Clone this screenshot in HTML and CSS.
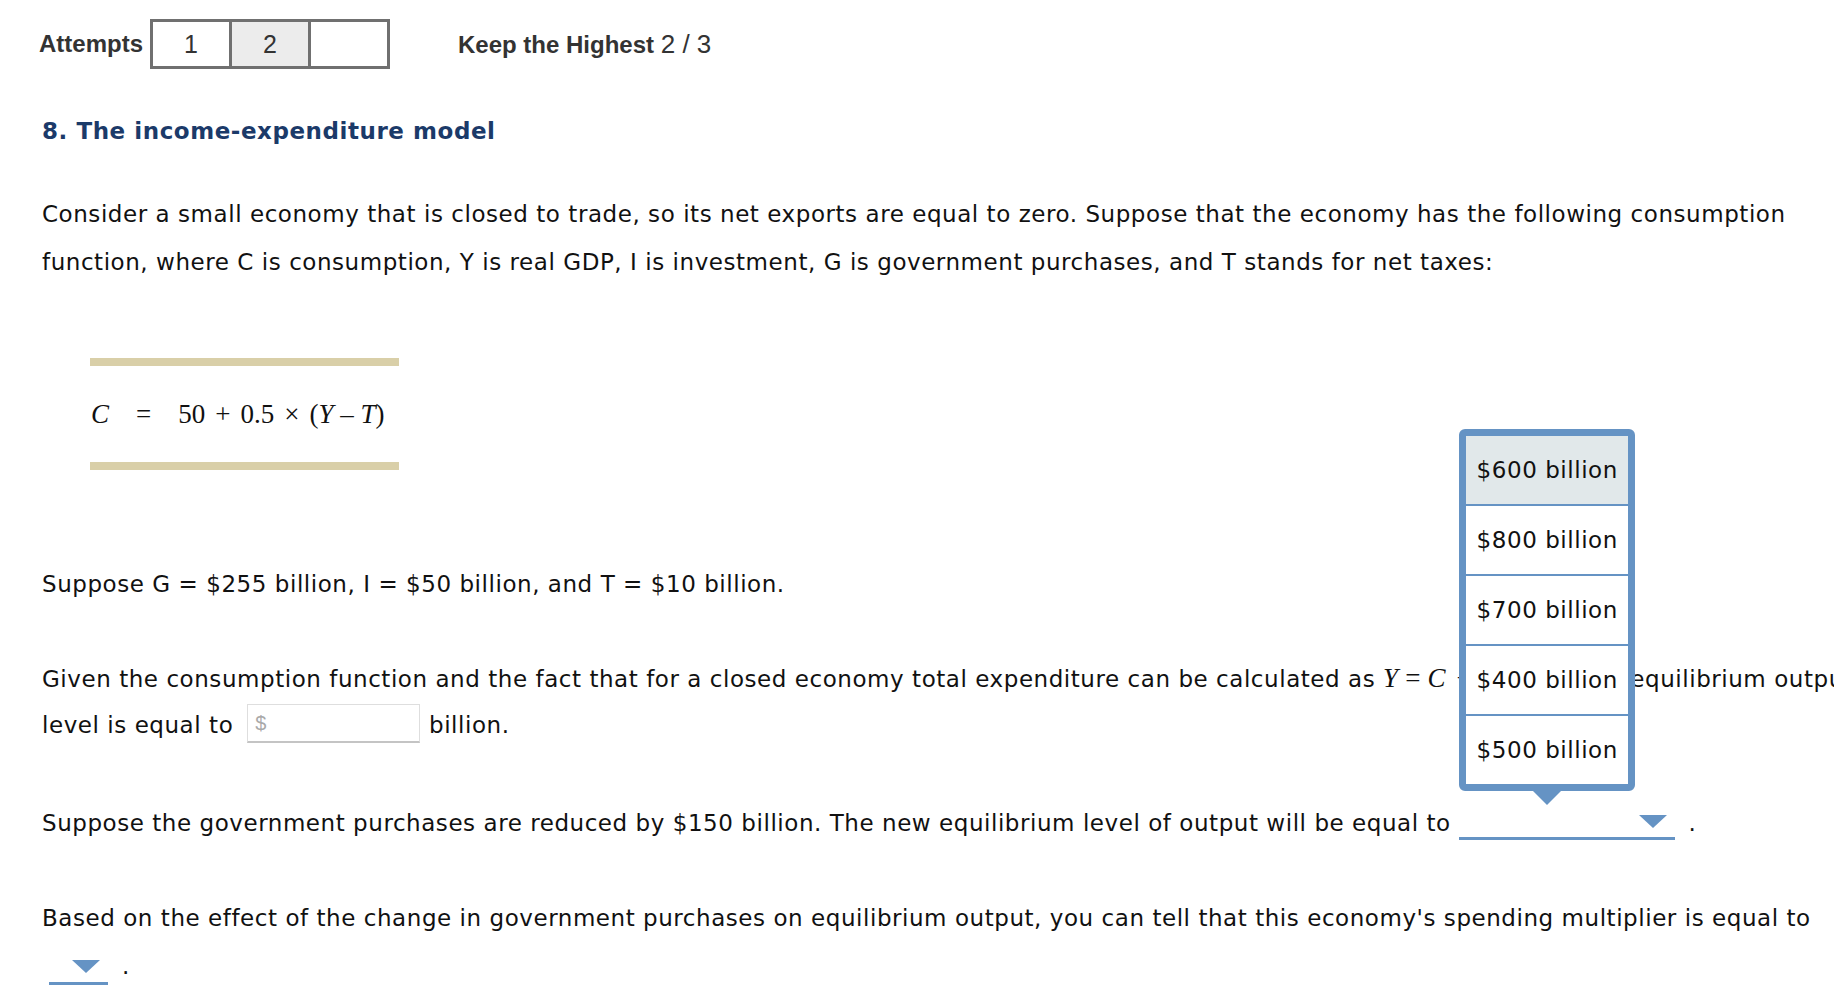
FILE: index.html
```html
<!DOCTYPE html>
<html>
<head>
<meta charset="utf-8">
<link rel="stylesheet" href="styles.css">
</head>
<body>
<div class="page">
  <div class="attempts-row">
    <span class="label">Attempts</span>
    <div class="attempt-boxes">
      <div class="attempt">1</div>
      <div class="attempt current">2</div>
      <div class="attempt"></div>
    </div>
    <span class="label keep">Keep the Highest <span class="score">2 / 3</span></span>
  </div>

  <h2 class="title">8. The income-expenditure model</h2>

  <p class="para p1">Consider a small economy that is closed to trade, so its net exports are equal to zero. Suppose that the economy has the following consumption<br>function, where C is consumption, Y is real GDP, I is investment, G is government purchases, and T stands for net taxes:</p>

  <div class="equation">
    <div class="eq-bar"></div>
    <div class="eq-row"><span class="mi">C</span><span class="eq-sign">=</span><span class="eq-rhs">50<span class="op">+</span>0.5<span class="op">×</span>(<i>Y</i> – <i>T</i>)</span></div>
    <div class="eq-bar"></div>
  </div>

  <p class="para p2">Suppose G = $255 billion, I = $50 billion, and T = $10 billion.</p>

  <p class="para p3">Given the consumption function and the fact that for a closed economy total expenditure can be calculated as <span class="math"><i>Y</i><span class="mop">=</span><i>C</i><span class="mop plus">+</span><i>I</i><span class="mop plus">+</span><i>G</i></span>, the equilibrium output<br>level is equal to <span class="answer"><span class="placeholder">$</span></span> billion.</p>

  <p class="para p4">Suppose the government purchases are reduced by $150 billion. The new equilibrium level of output will be equal to <span class="select wide"><span class="caret"></span>
      <span class="popup">
        <span class="option active">$600 billion</span>
        <span class="option">$800 billion</span>
        <span class="option">$700 billion</span>
        <span class="option">$400 billion</span>
        <span class="option">$500 billion</span>
        <span class="pointer"></span>
      </span>
    </span><span class="dot">.</span></p>

  <p class="para p5">Based on the effect of the change in government purchases on equilibrium output, you can tell that this economy's spending multiplier is equal to<br><span class="select narrow"><span class="caret"></span></span><span class="dot">.</span></p>
</div>
</body>
</html>
```

FILE: styles.css
```css
html {
  overflow: hidden;
  background: #ffffff;
}

body {
  margin: 0;
  color: #111111;
  font-family: "DejaVu Sans", Verdana, sans-serif;
}

.page {
  padding: 19px 0 0 42px;
}

.attempts-row {
  display: flex;
  align-items: center;
  height: 50px;
  margin-left: -3px;
  font-family: "Liberation Sans", Arial, sans-serif;
  color: #333333;
}

.label {
  font-weight: bold;
  font-size: 24px;
}

.attempt-boxes {
  display: flex;
  margin-left: 7px;
  border: 3px solid #707070;
  height: 50px;
  box-sizing: border-box;
}

.attempt {
  width: 76px;
  display: flex;
  align-items: center;
  justify-content: center;
  font-size: 25px;
  color: #333333;
}

.attempt + .attempt {
  border-left: 3px solid #707070;
}

.attempt.current {
  background: #ececec;
}

.keep {
  margin-left: 68px;
}

.score {
  font-weight: normal;
  font-size: 26px;
}

.title {
  margin: 47px 0 0 0;
  font-size: 23px;
  letter-spacing: 0.55px;
  line-height: 30px;
  font-weight: bold;
  color: #1b3a69;
}

.para {
  margin: 0;
  font-size: 23px;
  letter-spacing: 0.55px;
  line-height: 48px;
  white-space: nowrap;
}

.p1 {
  margin-top: 44px;
}

.equation {
  margin: 72px 0 0 48px;
  width: 309px;
}

.eq-bar {
  height: 8px;
  background: #d9cfa8;
}

.eq-row {
  height: 96px;
  line-height: 96px;
  font-family: "Liberation Serif", "Times New Roman", serif;
  font-size: 27px;
  color: #111111;
  padding-left: 1px;
}

.mi {
  font-style: italic;
}

.eq-sign {
  margin: 0 27px;
}

.op {
  margin: 0 10px;
}

.p2 {
  margin-top: 90px;
}

.p3 {
  margin-top: 47px;
  line-height: 46px;
}

.math {
  font-family: "Liberation Serif", "Times New Roman", serif;
  font-size: 27px;
  letter-spacing: 0;
  margin-right: 19px;
}

.mop {
  margin: 0 7px;
}

.mop.plus {
  margin: 0 11px;
}

.answer {
  display: inline-block;
  position: relative;
  width: 173px;
  height: 39px;
  box-sizing: border-box;
  border: 1px solid #dedede;
  border-bottom: 2px solid #c4c4c4;
  vertical-align: -10px;
  margin: 0 1px 0 6px;
}

.placeholder {
  position: absolute;
  left: 7px;
  top: 0;
  line-height: 37px;
  color: #a9a9a9;
  font-family: "Liberation Sans", Arial, sans-serif;
  font-size: 20px;
  letter-spacing: 0;
}

.p4 {
  margin-top: 51px;
}

.select {
  display: inline-block;
  position: relative;
  height: 36px;
  box-sizing: border-box;
  border-bottom: 3px solid #6593c4;
  vertical-align: -9px;
}

.select.wide {
  width: 216px;
}

.select.narrow {
  width: 59px;
  margin-left: 7px;
  vertical-align: -11px;
}

.caret {
  position: absolute;
  right: 8px;
  bottom: 9px;
  width: 0;
  height: 0;
  border-left: 14px solid transparent;
  border-right: 14px solid transparent;
  border-top: 13px solid #6593c4;
}

.dot {
  margin-left: 14px;
}

.popup {
  position: absolute;
  left: 0;
  bottom: 46px;
  width: 176px;
  box-sizing: border-box;
  border: 7px solid #6593c4;
  border-radius: 6px;
  background: #ffffff;
  display: flex;
  flex-direction: column;
}

.option {
  display: block;
  height: 68px;
  line-height: 68px;
  padding-left: 11px;
  color: #111111;
  font-size: 23px;
  letter-spacing: 0.55px;
  background: #ffffff;
}

.option + .option {
  border-top: 2px solid #6593c4;
}

.option.active {
  background: #e1e8ea;
}

.pointer {
  position: absolute;
  left: 50%;
  top: 100%;
  margin-left: -14px;
  margin-top: 7px;
  width: 0;
  height: 0;
  border-left: 14px solid transparent;
  border-right: 14px solid transparent;
  border-top: 14px solid #6593c4;
}

.p5 {
  margin-top: 47px;
}
```
